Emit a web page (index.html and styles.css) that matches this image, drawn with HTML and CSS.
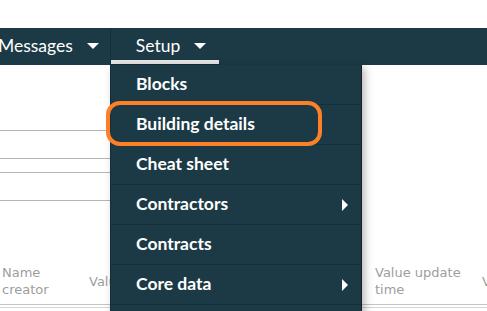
FILE: index.html
```html
<!DOCTYPE html>
<html>
<head>
<meta charset="utf-8">
<link rel="stylesheet" href="styles.css">
</head>
<body>
<div class="topspace"></div>
<nav class="navbar">
  <ul class="navlist">
    <li class="navitem first"><span class="navlabel">Messages</span><span class="caret"></span></li>
    <li class="navitem active"><span class="navlabel">Setup</span><span class="caret"></span></li>
  </ul>
</nav>
<main class="content">
  <div class="field"></div>
  <div class="field second"></div>
  <div class="thead">
    <div class="th">Name creator</div>
    <div class="th">Value</div>
    <div class="th">Value update time</div>
    <div class="th">Value updater</div>
  </div>
  <div class="tline"></div>
</main>
<ul class="dropdown">
  <li class="ditem"><span class="dlabel">Blocks</span></li>
  <li class="ditem"><span class="dlabel">Building details</span></li>
  <li class="ditem"><span class="dlabel">Cheat sheet</span></li>
  <li class="ditem"><span class="dlabel">Contractors</span><span class="rcaret"></span></li>
  <li class="ditem"><span class="dlabel">Contracts</span></li>
  <li class="ditem"><span class="dlabel">Core data</span><span class="rcaret"></span></li>
</ul>
<div class="highlight"></div>
</body>
</html>
```
FILE: styles.css
```css
html, body {
  margin: 0;
  padding: 0;
  background: #ffffff;
  overflow: hidden;
}
body {
  width: 487px;
  height: 311px;
  position: relative;
  font-family: Lato, "Open Sans", sans-serif;
}
ul { list-style: none; margin: 0; padding: 0; }

.topspace { height: 28px; }

.navbar {
  height: 37px;
  background: #1b3a46;
  overflow: hidden;
}
.navlist {
  display: flex;
  margin-left: -28px;
  height: 37px;
}
.navitem {
  display: flex;
  align-items: flex-start;
  padding: 7px 13px 0 26px;
  height: 37px;
  box-sizing: border-box;
  color: #ffffff;
  font-size: 17.5px;
  line-height: 21px;
}
.navitem.first {
  padding-right: 11px;
}
.navitem.active {
  border-left: 1px solid #132f3a;
  padding-left: 25px;
  box-shadow: inset 0 -1px 0 #132f3a, inset 0 -5px 0 #e6e6e6;
}
.caret {
  width: 0;
  height: 0;
  margin-left: 14px;
  margin-top: 8px;
  border-left: 6px solid transparent;
  border-right: 6px solid transparent;
  border-top: 6px solid #ffffff;
}

.content {
  padding-top: 65px;
}
.field {
  width: 230px;
  height: 27px;
  border-top: 1px solid #b4b4b4;
  border-bottom: 1px solid #b4b4b4;
}
.field.second { margin-top: 13px; }

.thead {
  margin-top: 57px;
  display: grid;
  grid-template-columns: 87px 286px 107px 100px;
  align-items: center;
  height: 46px;
  padding-left: 2px;
  width: 700px;
  border-bottom: 1px solid #c4c4c4;
}
.th {
  font-family: "DejaVu Sans", Lato, sans-serif;
  font-size: 13px;
  line-height: 17px;
  color: #9d9d9d;
  padding-right: 8px;
}
.tline {
  margin-top: 2px;
  width: 700px;
  border-top: 1px solid #d6d6d6;
}

.dropdown {
  position: absolute;
  left: 110px;
  top: 65px;
  width: 250px;
  padding-bottom: 12px;
  background: #1b3a46;
  border-left: 1px solid #132f3a;
  border-right: 1px solid #1e1e1e;
  box-shadow: 3px 2px 8px rgba(0, 0, 0, 0.28);
}
.ditem {
  display: flex;
  align-items: center;
  justify-content: space-between;
  height: 39px;
  padding: 0 13px 0 25px;
  border-bottom: 1px solid #12303a;
  color: #ffffff;
  font-weight: 700;
  font-size: 17.5px;
}
.dlabel {
  line-height: 21px;
  margin-bottom: 2px;
}
.rcaret {
  width: 0;
  height: 0;
  border-top: 6px solid transparent;
  border-bottom: 6px solid transparent;
  border-left: 6px solid #ffffff;
}

.highlight {
  position: absolute;
  left: 106px;
  top: 101px;
  width: 216px;
  height: 45px;
  box-sizing: border-box;
  border: 4px solid #ff7f27;
  border-radius: 14px;
}
```
